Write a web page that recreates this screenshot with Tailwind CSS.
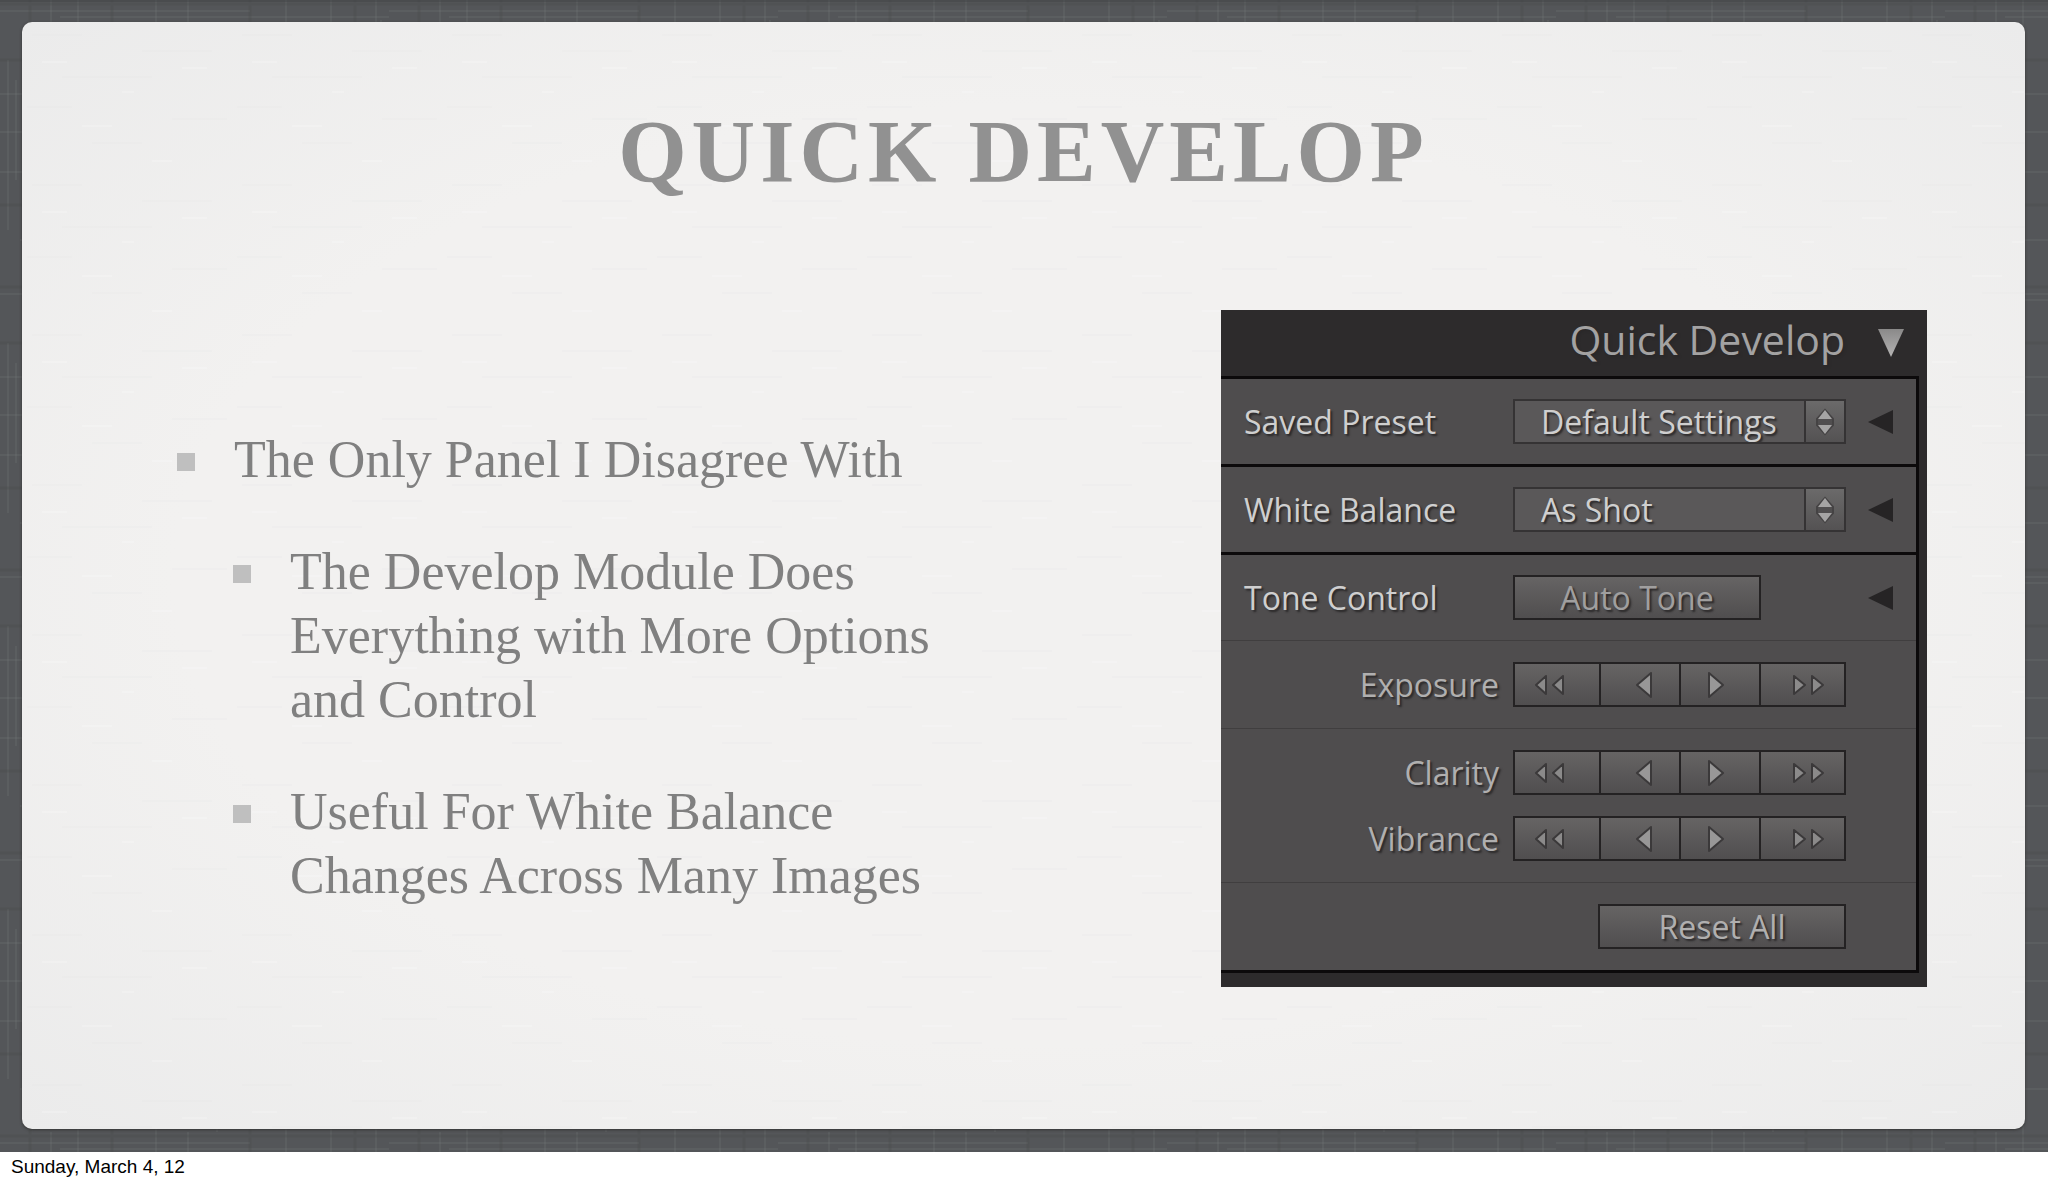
<!DOCTYPE html>
<html lang="en">
  <head>
    <meta charset="UTF-8" />
    <meta name="viewport" content="width=device-width,initial-scale=1.0" />
    <title>Quick Develop</title>
    <script src="https://cdn.jsdelivr.net/npm/@tailwindcss/browser@4"></script>
  </head>
  <body class="min-h-screen flex flex-col bg-white">
    <!-- shared icons -->
    <svg class="hidden">
      <symbol id="back2" viewBox="0 0 84 41">
        <path d="M21 21L31 12V30ZM38 21L48 12V30Z" fill="#8b8a8a" stroke="#3b393a" stroke-width="2" stroke-linejoin="round" />
      </symbol>
      <symbol id="back1" viewBox="0 0 78 41">
        <path d="M36 21L50 9V33Z" fill="#989797" stroke="#3b393a" stroke-width="2" stroke-linejoin="round" />
      </symbol>
      <symbol id="next1" viewBox="0 0 78 41">
        <path d="M42 21L28 9V33Z" fill="#989797" stroke="#3b393a" stroke-width="2" stroke-linejoin="round" />
      </symbol>
      <symbol id="next2" viewBox="0 0 83 41">
        <path d="M44 21L33 12V30ZM62 21L51 12V30Z" fill="#8b8a8a" stroke="#3b393a" stroke-width="2" stroke-linejoin="round" />
      </symbol>
      <symbol id="updown" viewBox="0 0 38 41">
        <path d="M19 9L27 18V24L19 33L11 24V18Z" fill="#504e4f" stroke="#454344" stroke-width="2" />
        <path d="M19 9L26 18H12ZM19 33L26 24H12Z" fill="#a5a4a4" />
      </symbol>
      <symbol id="fold" viewBox="0 0 25 24">
        <path d="M0 12L25 0V24Z" fill="#262425" />
      </symbol>
    </svg>

    <div class="relative flex-1 flex flex-col pt-[22px] pl-[22px] pr-[23px] pb-[23px] bg-[#545659]">
      <!-- woven backdrop -->
      <svg class="absolute inset-0 w-full h-full" aria-hidden="true">
        <defs>
          <pattern id="weave" width="389" height="283" patternUnits="userSpaceOnUse">
            <path d="M0 11H250M60 17H389M0 94H389M0 132H180M0 172H389M20 240H389" stroke="#7b8083" stroke-opacity=".35" />
            <path d="M51 0V200M78 0V283M156 0V283M188 0V120M217 40V283M286 0V283M331 0V283M376 0V283M8 60V230M16 80V180M381 20V160" stroke="#7b8083" stroke-opacity=".35" />
            <path d="M0 4H389M0 60H389M0 205H389M30 0V283M112 0V283M250 0V283M355 0V283" stroke="#45484a" stroke-width="3" stroke-opacity=".3" />
          </pattern>
        </defs>
        <rect width="100%" height="100%" fill="url(#weave)" />
        <rect width="100%" height="2" fill="#3f4144" fill-opacity=".5" />
      </svg>

      <main
        class="relative flex-1 rounded-[10px] bg-[#f1f0ef] bg-radial from-[#f2f1f0] from-60% to-[#ebebeb] shadow-[0_1px_3px_#333] font-['Liberation_Serif',serif]"
      >
        <svg class="absolute inset-0 w-full h-full" aria-hidden="true">
          <defs>
            <pattern id="paper" width="210" height="150" patternUnits="userSpaceOnUse">
              <path d="M10 13H60M120 29H190M40 55H130M5 85H50M150 97H205M70 121H120" stroke="#e3e2e1" stroke-opacity=".35" />
              <path d="M20 40H45M100 70H112M160 46H185M60 104H90M130 139H150" stroke="#fff" stroke-opacity=".35" />
            </pattern>
          </defs>
          <rect width="100%" height="100%" rx="10" fill="url(#paper)" />
        </svg>

        <div class="relative">
          <h1 class="pt-[78px] text-center text-[88px] leading-[104px] font-bold tracking-[5px] text-[#919191]">QUICK DEVELOP</h1>

          <div class="mt-[106px] pl-[155px] pr-[98px] flex justify-between items-start">
            <ul class="mt-[118px] w-[800px] text-[52px] leading-[64px] text-[#808080]">
              <li>
                <div class="flex gap-[39px]">
                  <span class="mt-[25px] size-[18px] shrink-0 bg-[#bfbfbf]"></span>
                  <p>The Only Panel I Disagree With</p>
                </div>
                <ul class="mt-12 pl-14 flex flex-col gap-12">
                  <li class="flex gap-[39px]">
                    <span class="mt-[25px] size-[18px] shrink-0 bg-[#bfbfbf]"></span>
                    <p>The Develop Module Does Everything with More Options and Control</p>
                  </li>
                  <li class="flex gap-[39px]">
                    <span class="mt-[25px] size-[18px] shrink-0 bg-[#bfbfbf]"></span>
                    <p>Useful For White Balance Changes Across Many Images</p>
                  </li>
                </ul>
              </li>
            </ul>

            <!-- quick develop panel -->
            <section
              class="w-[706px] pr-2 pb-[14px] bg-[#2d2b2c] font-['Open_Sans',sans-serif] text-[32px] font-medium leading-[45px] text-[#cfcfcf] text-shadow-[2px_2px_2px_#2a2829]"
            >
              <header class="h-[66px] pr-[15px] flex items-center justify-end gap-[33px]">
                <h2 class="pb-2 text-[41px] text-[#a3a2a2]">Quick Develop</h2>
                <svg class="w-[26px] h-[28px]" viewBox="0 0 26 28">
                  <defs>
                    <linearGradient id="tri" x2="0" y2="1">
                      <stop stop-color="#8a8989" />
                      <stop offset="1" stop-color="#b5b4b4" />
                    </linearGradient>
                  </defs>
                  <path d="M0 0H26L13 28Z" fill="url(#tri)" />
                </svg>
              </header>

              <div class="border-y-3 border-r-3 border-[#0c0a0b] bg-[#4f4d4e]">
                <div class="py-5 flex items-center border-b-3 border-[#0c0a0b]">
                  <label for="preset" class="w-[292px] pl-[23px]">Saved Preset</label>
                  <div class="relative w-[333px]">
                    <select id="preset" class="block appearance-none w-full h-[45px] pl-[26px] border-2 border-[#353334] bg-[#5a5859] leading-[40px] text-shadow-[2px_2px_2px_#2a2829]">
                      <option>Default Settings</option>
                    </select>
                    <svg class="absolute right-[2px] top-[2px] w-10 h-[41px] border-l-2 border-[#353334] bg-linear-to-b from-[#6b6a6a] to-[#545253] pointer-events-none"><use href="#updown" /></svg>
                  </div>
                  <svg class="ml-[22px] w-[25px] h-6"><use href="#fold" /></svg>
                </div>

                <div class="py-5 flex items-center border-b-3 border-[#0c0a0b]">
                  <label for="balance" class="w-[292px] pl-[23px]">White Balance</label>
                  <div class="relative w-[333px]">
                    <select id="balance" class="block appearance-none w-full h-[45px] pl-[26px] border-2 border-[#353334] bg-[#5a5859] leading-[40px] text-shadow-[2px_2px_2px_#2a2829]">
                      <option>As Shot</option>
                    </select>
                    <svg class="absolute right-[2px] top-[2px] w-10 h-[41px] border-l-2 border-[#353334] bg-linear-to-b from-[#6b6a6a] to-[#545253] pointer-events-none"><use href="#updown" /></svg>
                  </div>
                  <svg class="ml-[22px] w-[25px] h-6"><use href="#fold" /></svg>
                </div>

                <div class="py-5 flex items-center border-b border-[#403e3f]">
                  <span class="w-[292px] pl-[23px]">Tone Control</span>
                  <div class="w-[333px]">
                    <button class="block w-[248px] h-[45px] border-2 border-[#242223] bg-linear-to-b from-[#666464] to-[#504e4f] leading-[40px] text-[#a09f9f] text-shadow-[2px_2px_2px_#2a2829]">Auto Tone</button>
                  </div>
                  <svg class="ml-[22px] w-[25px] h-6"><use href="#fold" /></svg>
                </div>

                <div class="py-[21px] flex items-center border-b border-[#403e3f]">
                  <span class="w-[292px] pr-[14px] text-right text-[#b0afaf]">Exposure</span>
                  <div class="w-[333px] h-[45px] p-[2px] grid grid-cols-[84px_78px_78px_1fr] gap-[2px] bg-[#242223]">
                    <button aria-label="Exposure down a lot" class="bg-linear-to-b from-[#666464] to-[#504e4f]"><svg class="w-full h-[41px]"><use href="#back2" /></svg></button>
                    <button aria-label="Exposure down" class="bg-linear-to-b from-[#666464] to-[#504e4f]"><svg class="w-full h-[41px]"><use href="#back1" /></svg></button>
                    <button aria-label="Exposure up" class="bg-linear-to-b from-[#666464] to-[#504e4f]"><svg class="w-full h-[41px]"><use href="#next1" /></svg></button>
                    <button aria-label="Exposure up a lot" class="bg-linear-to-b from-[#666464] to-[#504e4f]"><svg class="w-full h-[41px]"><use href="#next2" /></svg></button>
                  </div>
                </div>

                <div class="py-[21px] flex flex-col gap-[21px] border-b border-[#403e3f]">
                  <div class="flex items-center">
                    <span class="w-[292px] pr-[14px] text-right text-[#b0afaf]">Clarity</span>
                    <div class="w-[333px] h-[45px] p-[2px] grid grid-cols-[84px_78px_78px_1fr] gap-[2px] bg-[#242223]">
                      <button aria-label="Clarity down a lot" class="bg-linear-to-b from-[#666464] to-[#504e4f]"><svg class="w-full h-[41px]"><use href="#back2" /></svg></button>
                      <button aria-label="Clarity down" class="bg-linear-to-b from-[#666464] to-[#504e4f]"><svg class="w-full h-[41px]"><use href="#back1" /></svg></button>
                      <button aria-label="Clarity up" class="bg-linear-to-b from-[#666464] to-[#504e4f]"><svg class="w-full h-[41px]"><use href="#next1" /></svg></button>
                      <button aria-label="Clarity up a lot" class="bg-linear-to-b from-[#666464] to-[#504e4f]"><svg class="w-full h-[41px]"><use href="#next2" /></svg></button>
                    </div>
                  </div>
                  <div class="flex items-center">
                    <span class="w-[292px] pr-[14px] text-right text-[#b0afaf]">Vibrance</span>
                    <div class="w-[333px] h-[45px] p-[2px] grid grid-cols-[84px_78px_78px_1fr] gap-[2px] bg-[#242223]">
                      <button aria-label="Vibrance down a lot" class="bg-linear-to-b from-[#666464] to-[#504e4f]"><svg class="w-full h-[41px]"><use href="#back2" /></svg></button>
                      <button aria-label="Vibrance down" class="bg-linear-to-b from-[#666464] to-[#504e4f]"><svg class="w-full h-[41px]"><use href="#back1" /></svg></button>
                      <button aria-label="Vibrance up" class="bg-linear-to-b from-[#666464] to-[#504e4f]"><svg class="w-full h-[41px]"><use href="#next1" /></svg></button>
                      <button aria-label="Vibrance up a lot" class="bg-linear-to-b from-[#666464] to-[#504e4f]"><svg class="w-full h-[41px]"><use href="#next2" /></svg></button>
                    </div>
                  </div>
                </div>

                <div class="py-[21px] pr-[70px] flex justify-end">
                  <button class="w-[248px] h-[45px] border-2 border-[#242223] bg-linear-to-b from-[#666464] to-[#504e4f] leading-[40px] text-[#b0afaf] text-shadow-[2px_2px_2px_#2a2829]">Reset All</button>
                </div>
              </div>
            </section>
          </div>
        </div>
      </main>
    </div>

    <footer class="h-8 pl-[11px] font-['Liberation_Sans',sans-serif] text-[19px] leading-[30px] text-black">Sunday, March 4, 12</footer>
  </body>
</html>
